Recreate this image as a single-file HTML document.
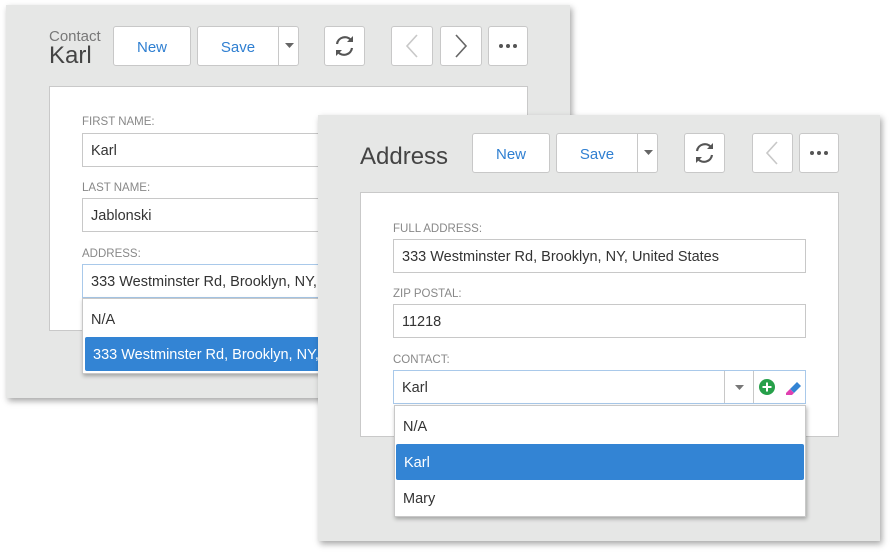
<!DOCTYPE html>
<html><head><style>
*{box-sizing:border-box;margin:0;padding:0}
body{width:893px;height:556px;background:#fff;position:relative;overflow:hidden;font-family:"Liberation Sans",sans-serif;color:#333}
.win{position:absolute;background:#e6e7e6;box-shadow:2px 3px 6px rgba(0,0,0,.35)}
.a{position:absolute}
.btn{position:absolute;background:#fff;border:1px solid #c8c8c8;border-radius:3px}
.bt{color:#2f7fd1;font-size:15px;text-align:center}
.panel{position:absolute;background:#fff;border:1px solid #c9c9c9}
.lbl{position:absolute;font-size:11.5px;color:#888}
.inp{position:absolute;background:#fff;border:1px solid #c8c8c8;font-size:14.5px;padding-left:8px;color:#333;white-space:nowrap;overflow:hidden}
.list{position:absolute;background:#fff;border:1px solid #c8c8c8;box-shadow:1px 2px 4px rgba(0,0,0,.3)}
.it{position:absolute;left:0;right:0;font-size:14.5px;padding-left:8px;white-space:nowrap;overflow:hidden}
.sel{background:#3384d4;color:#fff;border-radius:2px}
</style></head><body>

<!-- window 1 -->
<div class="win" style="left:6px;top:5px;width:564px;height:393px"></div>
<div class="a" style="left:49px;top:28px;font-size:15px;color:#777">Contact</div>
<div class="a" style="left:49px;top:42px;font-size:24px;color:#444">Karl</div>
<div class="btn bt" style="left:113px;top:26px;width:78px;height:40px;line-height:42px">New</div>
<div class="btn bt" style="left:197px;top:26px;width:102px;height:40px;line-height:42px"><span style="position:absolute;left:0;width:80px">Save</span><span style="position:absolute;left:80px;top:0;bottom:0;border-left:1px solid #c8c8c8;width:21px"><svg width="21" height="38"><path d="M6 16h9l-4.5 5z" fill="#666"/></svg></span></div>
<div class="btn" style="left:324px;top:26px;width:41px;height:40px"><svg width="39" height="38" viewBox="0 0 39 38"><g fill="none" stroke="#555" stroke-width="2.2"><path d="M12 17a8 8 0 0 1 14-4"/><path d="M27 21a8 8 0 0 1-14 4"/></g><path d="M28 9v6h-6z" fill="#555"/><path d="M11 29v-6h6z" fill="#555"/></svg></div>
<div class="btn" style="left:391px;top:26px;width:42px;height:40px"><svg width="40" height="38"><path d="M25 8l-10 11 10 11" fill="none" stroke="#c8c8c8" stroke-width="1.6"/></svg></div>
<div class="btn" style="left:440px;top:26px;width:42px;height:40px"><svg width="40" height="38"><path d="M15 8l10 11-10 11" fill="none" stroke="#666" stroke-width="1.6"/></svg></div>
<div class="btn" style="left:488px;top:26px;width:40px;height:40px"><svg width="38" height="38"><circle cx="12" cy="19" r="2" fill="#555"/><circle cx="19" cy="19" r="2" fill="#555"/><circle cx="26" cy="19" r="2" fill="#555"/></svg></div>
<div class="panel" style="left:49px;top:86px;width:479px;height:245px"></div>
<div class="lbl" style="left:82px;top:116px">FIRST NAME:</div>
<div class="inp" style="left:82px;top:133px;width:260px;height:34px;line-height:35px">Karl</div>
<div class="lbl" style="left:82px;top:182px">LAST NAME:</div>
<div class="inp" style="left:82px;top:198px;width:260px;height:34px;line-height:35px">Jablonski</div>
<div class="lbl" style="left:82px;top:248px">ADDRESS:</div>
<div class="inp" style="left:82px;top:264px;width:260px;height:34px;line-height:35px;border-color:#a9c9ea">333 Westminster Rd, Brooklyn, NY, United States</div>
<div class="list" style="left:82px;top:298px;width:260px;height:76px">
<div class="it" style="top:4px;height:32px;line-height:35px">N/A</div>
<div class="it sel" style="top:38px;left:2px;height:34px;line-height:36px">333 Westminster Rd, Brooklyn, NY, United States</div>
</div>

<!-- window 2 -->
<div class="win" style="left:318px;top:115px;width:562px;height:426px"></div>
<div class="a" style="left:360px;top:143px;font-size:24px;color:#444">Address</div>
<div class="btn bt" style="left:472px;top:133px;width:78px;height:40px;line-height:42px">New</div>
<div class="btn bt" style="left:556px;top:133px;width:102px;height:40px;line-height:42px"><span style="position:absolute;left:0;width:80px">Save</span><span style="position:absolute;left:80px;top:0;bottom:0;border-left:1px solid #c8c8c8;width:21px"><svg width="21" height="38"><path d="M6 16h9l-4.5 5z" fill="#666"/></svg></span></div>
<div class="btn" style="left:684px;top:133px;width:41px;height:40px"><svg width="39" height="38" viewBox="0 0 39 38"><g fill="none" stroke="#555" stroke-width="2.2"><path d="M12 17a8 8 0 0 1 14-4"/><path d="M27 21a8 8 0 0 1-14 4"/></g><path d="M28 9v6h-6z" fill="#555"/><path d="M11 29v-6h6z" fill="#555"/></svg></div>
<div class="btn" style="left:752px;top:133px;width:41px;height:40px"><svg width="39" height="38"><path d="M24 8l-10 11 10 11" fill="none" stroke="#c8c8c8" stroke-width="1.6"/></svg></div>
<div class="btn" style="left:799px;top:133px;width:40px;height:40px"><svg width="38" height="38"><circle cx="12" cy="19" r="2" fill="#555"/><circle cx="19" cy="19" r="2" fill="#555"/><circle cx="26" cy="19" r="2" fill="#555"/></svg></div>
<div class="panel" style="left:360px;top:192px;width:479px;height:245px"></div>
<div class="lbl" style="left:393px;top:223px">FULL ADDRESS:</div>
<div class="inp" style="left:393px;top:239px;width:413px;height:34px;line-height:35px">333 Westminster Rd, Brooklyn, NY, United States</div>
<div class="lbl" style="left:393px;top:288px">ZIP POSTAL:</div>
<div class="inp" style="left:393px;top:304px;width:413px;height:34px;line-height:35px">11218</div>
<div class="lbl" style="left:393px;top:354px">CONTACT:</div>
<div class="inp" style="left:393px;top:370px;width:413px;height:34px;line-height:35px;border-color:#a9c9ea">Karl
<span style="position:absolute;left:330px;top:0;bottom:0;border-left:1px solid #c8c8c8;width:29px"><svg width="28" height="32"><path d="M10 14h9l-4.5 5z" fill="#777"/></svg></span>
<span style="position:absolute;left:359px;top:0;bottom:0;border-left:1px solid #c8c8c8;width:53px"><svg width="53" height="32"><circle cx="13" cy="16" r="8" fill="#26a04a"/><path d="M13 11.5v9M8.5 16h9" stroke="#fff" stroke-width="2"/><path d="M36 18l7-7 4 4-7 7z" fill="#3384d4"/><path d="M32 22l4-4 4 4-2 2h-6z" fill="#e040b0"/></svg></span></div>
<div class="list" style="left:394px;top:405px;width:412px;height:112px">
<div class="it" style="top:4px;height:32px;line-height:35px">N/A</div>
<div class="it sel" style="top:38px;left:1px;right:1px;height:36px;line-height:38px">Karl</div>
<div class="it" style="top:76px;height:32px;line-height:35px">Mary</div>
</div>
</body></html>
